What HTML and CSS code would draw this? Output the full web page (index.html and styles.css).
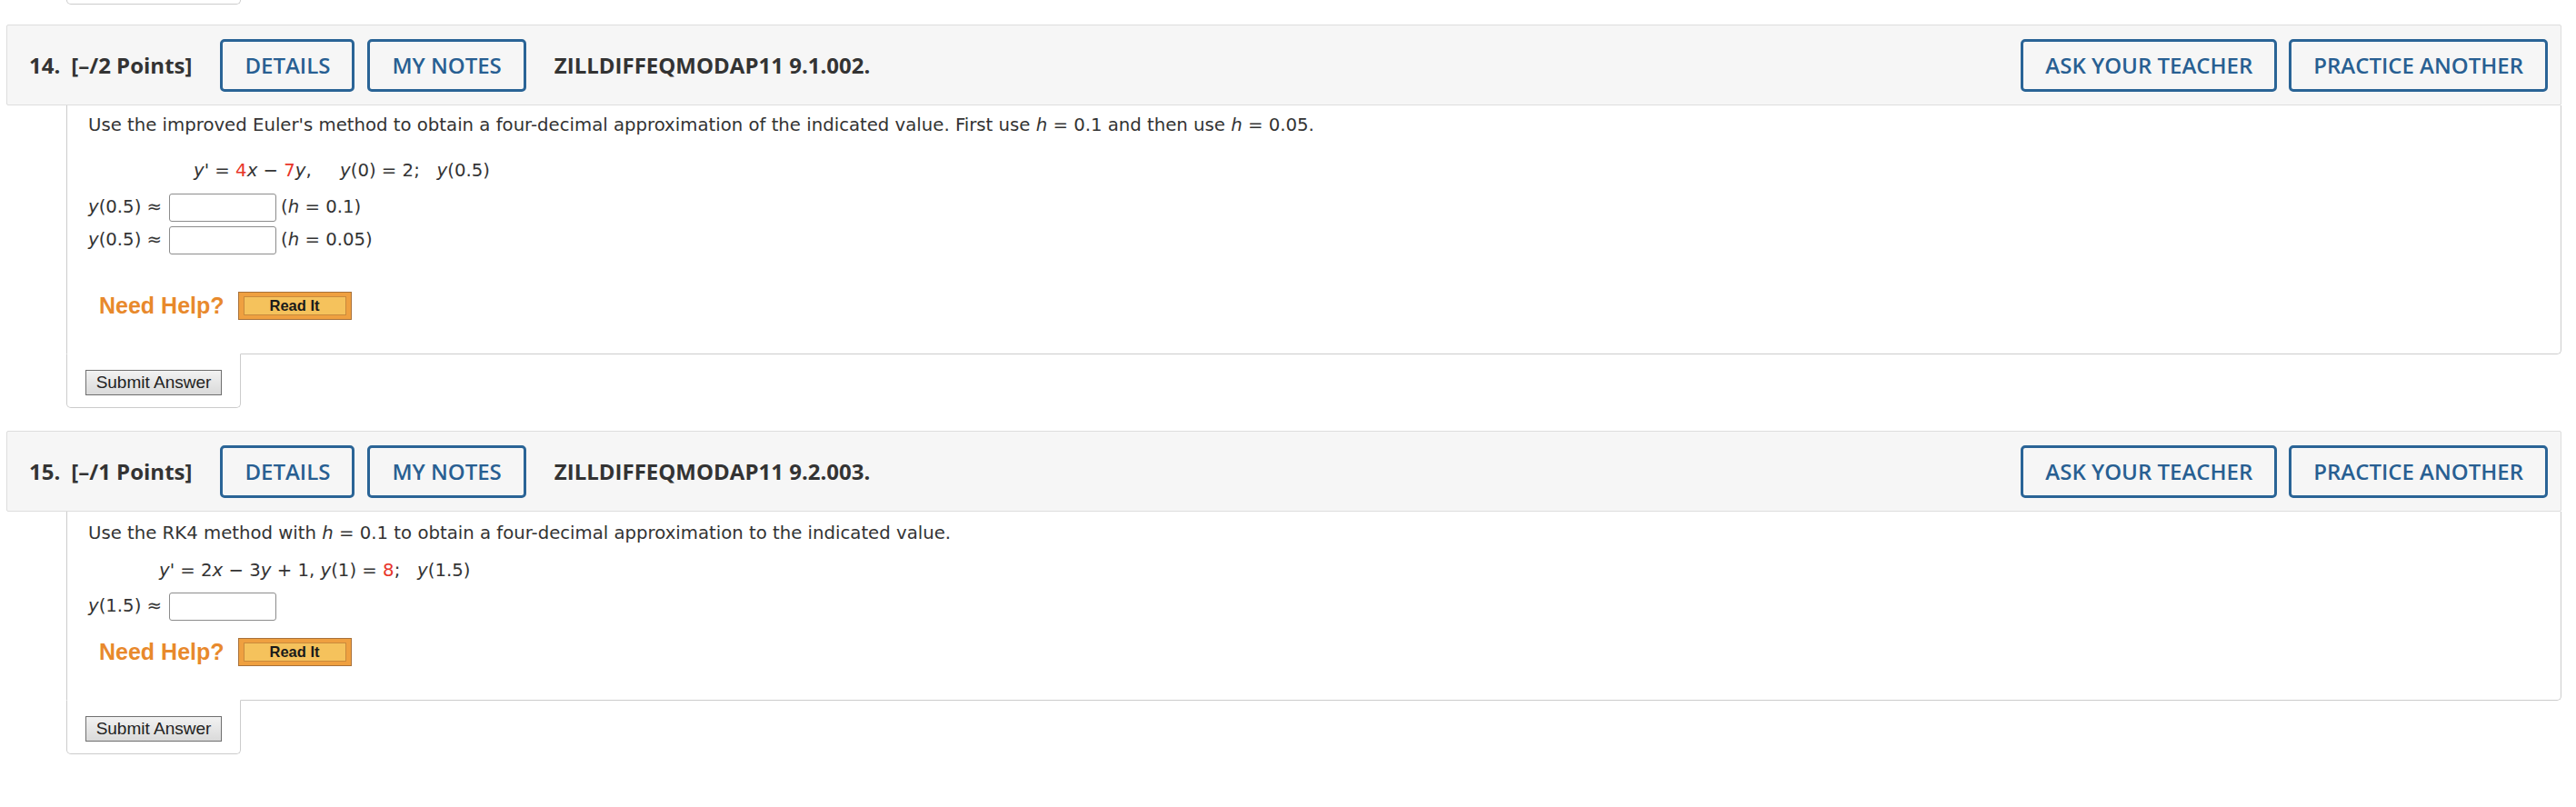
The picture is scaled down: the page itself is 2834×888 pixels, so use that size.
FILE: index.html
```html
<!DOCTYPE html>
<html lang="en">
<head>
<meta charset="utf-8">
<title>Questions</title>
<link rel="stylesheet" href="styles.css">
</head>
<body>
<div class="page">
  <div class="prev-tab"></div>

  <section class="question q14">
    <div class="qhead">
      <span class="qnum">14.</span>
      <span class="qpts">[–/2 Points]</span>
      <div class="btns left-btns">
        <button class="hbtn">DETAILS</button>
        <button class="hbtn">MY NOTES</button>
      </div>
      <span class="qcode">ZILLDIFFEQMODAP11 9.1.002.</span>
      <div class="spacer"></div>
      <div class="btns">
        <button class="hbtn">ASK YOUR TEACHER</button>
        <button class="hbtn">PRACTICE ANOTHER</button>
      </div>
    </div>
    <div class="qbody">
      <p class="prompt">Use the improved Euler's method to obtain a four-decimal approximation of the indicated value. First use <i>h</i> = 0.1 and then use <i>h</i> = 0.05.</p>
      <p class="eq"><i>y</i>' = <span class="red">4</span><i>x</i> − <span class="red">7</span><i>y</i>, &nbsp;&nbsp;&nbsp; <i>y</i>(0) = 2;&nbsp;&nbsp; <i>y</i>(0.5)</p>
      <div class="ansrow"><span class="lbl"><i>y</i>(0.5) ≈</span><span class="inp"></span><span class="after">(<i>h</i> = 0.1)</span></div>
      <div class="ansrow"><span class="lbl"><i>y</i>(0.5) ≈</span><span class="inp"></span><span class="after">(<i>h</i> = 0.05)</span></div>
      <div class="help"><span class="needhelp">Need Help?</span><span class="readit"><span class="readit-in">Read It</span></span></div>
    </div>
    <div class="tab"><button class="submit">Submit Answer</button></div>
  </section>

  <section class="question q15">
    <div class="qhead">
      <span class="qnum">15.</span>
      <span class="qpts">[–/1 Points]</span>
      <div class="btns left-btns">
        <button class="hbtn">DETAILS</button>
        <button class="hbtn">MY NOTES</button>
      </div>
      <span class="qcode">ZILLDIFFEQMODAP11 9.2.003.</span>
      <div class="spacer"></div>
      <div class="btns">
        <button class="hbtn">ASK YOUR TEACHER</button>
        <button class="hbtn">PRACTICE ANOTHER</button>
      </div>
    </div>
    <div class="qbody">
      <p class="prompt">Use the RK4 method with <i>h</i> = 0.1 to obtain a four-decimal approximation to the indicated value.</p>
      <p class="eq"><i>y</i>' = 2<i>x</i> − 3<i>y</i> + 1, <i>y</i>(1) = <span class="red">8</span>;&nbsp;&nbsp; <i>y</i>(1.5)</p>
      <div class="ansrow"><span class="lbl"><i>y</i>(1.5) ≈</span><span class="inp"></span></div>
      <div class="help"><span class="needhelp">Need Help?</span><span class="readit"><span class="readit-in">Read It</span></span></div>
    </div>
    <div class="tab"><button class="submit">Submit Answer</button></div>
  </section>
</div>
</body>
</html>
```
FILE: styles.css
```css
* { box-sizing: border-box; }
html, body { margin: 0; padding: 0; background: #fff; }
body { font-family: "DejaVu Sans", Verdana, sans-serif; color: #333; }

.page { margin: 0 16px 0 7px; }

.prev-tab {
  margin-left: 66px;
  width: 192px;
  height: 5px;
  border: 1px solid #ccc;
  border-top: none;
  border-radius: 0 0 5px 5px;
}

.question { margin-top: 22px; }

.qhead {
  display: flex;
  align-items: center;
  height: 89px;
  padding: 0 14px 0 24px;
  background: #f6f6f6;
  border: 1px solid #ddd;
  border-radius: 2px;
  font-family: "Open Sans", sans-serif;
  font-size: 24px;
  color: #333;
}
.qnum { font-weight: 700; margin-right: 12px; }
.qpts { font-weight: 700; }
.qcode { font-weight: 700; margin-left: 31px; }
.spacer { flex: 1; }
.btns { display: flex; gap: 13px; }
.left-btns { margin-left: 31px; gap: 14px; }

.hbtn {
  height: 58px;
  padding: 0 24px;
  background: transparent;
  border: 3px solid #2a6496;
  border-radius: 5px;
  font-family: "Open Sans", sans-serif;
  font-size: 24px;
  font-weight: 600;
  color: #285f92;
}

.qbody {
  margin-left: 66px;
  border: 1px solid #ccc;
  border-top: none;
  border-radius: 0 0 5px 0;
  padding: 10px 20px 35px 23px;
  font-size: 19.7px;
  line-height: 24px;
}
.qbody p { margin: 0; }
.red { color: #e8352a; }

.q14 .eq { margin-top: 26px; padding-left: 116px; }

.ansrow { display: flex; align-items: center; height: 36px; }
.q14 .eq + .ansrow { margin-top: 10px; }
.lbl { margin-right: 8px; }
.inp {
  width: 118px;
  height: 31px;
  border: 1px solid #8c8c8c;
  border-radius: 3px;
  background: #fff;
}
.after { margin-left: 5px; }

.help { display: flex; align-items: center; height: 36px; margin-top: 36px; padding-left: 12px; }
.needhelp {
  font-family: "Liberation Sans", Arial, sans-serif;
  font-weight: 700;
  font-size: 25px;
  color: #e8892c;
  margin-right: 15px;
}
.readit {
  display: flex;
  width: 125px;
  height: 31px;
  padding: 4px 5px;
  background: #efa040;
  border: 1px solid #a8713a;
}
.readit-in {
  flex: 1;
  display: flex;
  align-items: center;
  justify-content: center;
  background: #f5c25c;
  border: 1px solid #c98a3c;
  font-family: "Liberation Sans", Arial, sans-serif;
  font-weight: 700;
  font-size: 16.5px;
  color: #1a1a1a;
}

.tab {
  position: relative;
  margin-left: 66px;
  margin-top: -1px;
  width: 192px;
  padding: 17px 0 13px 20px;
  border: 1px solid #ccc;
  border-top: 1px solid #fff;
  border-radius: 0 0 5px 5px;
  background: #fff;
}
.submit {
  display: block;
  width: 150px;
  height: 28px;
  padding: 0;
  background: linear-gradient(#f2f2f2, #dadada);
  border: 1px solid #6f6f6f;
  border-radius: 0;
  font-family: "Liberation Sans", Arial, sans-serif;
  font-size: 19px;
  color: #222;
}

.q15 { margin-top: 25px; }
.q15 .qbody { padding-top: 12px; }
.q15 .eq { margin-top: 17px; padding-left: 78px; }
.q15 .eq + .ansrow { margin-top: 9px; }
.q15 .help { margin-top: 14px; }
```
